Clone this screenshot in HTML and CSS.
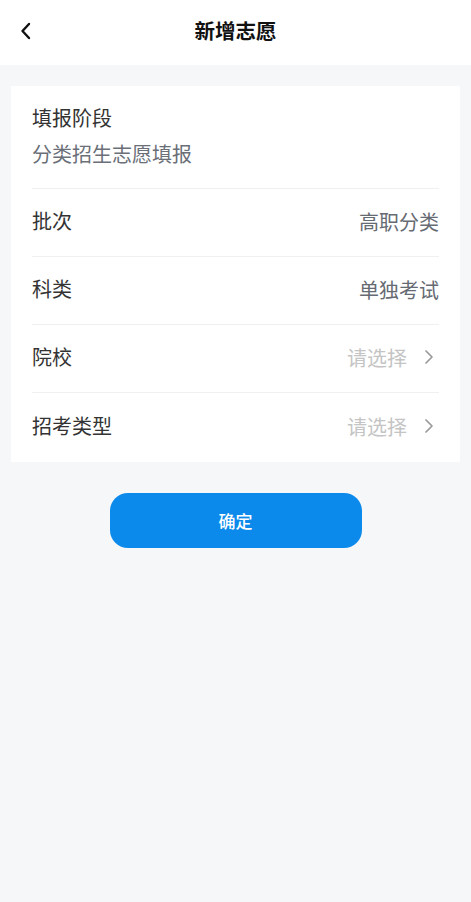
FILE: index.html
```html
<!DOCTYPE html>
<html lang="zh-CN">
<head>
<meta charset="utf-8">
<title>新增志愿</title>
<link rel="stylesheet" href="styles.css">
</head>
<body>
<div class="page">
  <header class="nav">
    <span class="back">
      <svg width="14" height="18" viewBox="0 0 14 18"><path d="M10 2 L3.5 9 L10 16" fill="none" stroke="#111" stroke-width="2.4" stroke-linecap="round" stroke-linejoin="round"/></svg>
    </span>
    <h1 class="title">新增志愿</h1>
  </header>
  <main class="content">
    <section class="card">
      <div class="stage">
        <div class="label">填报阶段</div>
        <div class="stage-value">分类招生志愿填报</div>
      </div>
      <div class="row">
        <span class="label">批次</span>
        <span class="value">高职分类</span>
      </div>
      <div class="row">
        <span class="label">科类</span>
        <span class="value">单独考试</span>
      </div>
      <div class="row">
        <span class="label">院校</span>
        <span class="picker"><span class="placeholder">请选择</span>
          <svg class="arrow" width="12" height="16" viewBox="0 0 12 16"><path d="M3 2 L9 8 L3 14" fill="none" stroke="#9a9a9a" stroke-width="1.7" stroke-linecap="round" stroke-linejoin="round"/></svg>
        </span>
      </div>
      <div class="row">
        <span class="label">招考类型</span>
        <span class="picker"><span class="placeholder">请选择</span>
          <svg class="arrow" width="12" height="16" viewBox="0 0 12 16"><path d="M3 2 L9 8 L3 14" fill="none" stroke="#9a9a9a" stroke-width="1.7" stroke-linecap="round" stroke-linejoin="round"/></svg>
        </span>
      </div>
    </section>
    <div class="actions">
      <button class="confirm">确定</button>
    </div>
  </main>
</div>
</body>
</html>
```
FILE: styles.css
```css
* { box-sizing: border-box; }
html, body { margin: 0; padding: 0; }
body {
  font-family: "Noto Sans CJK SC", "Noto Sans", sans-serif;
  background: #f5f7f9;
  color: #333;
}
.page { min-height: 902px; display: flex; flex-direction: column; }
.nav {
  height: 65px;
  padding-bottom: 4px;
  background: #fff;
  display: flex;
  align-items: center;
  justify-content: center;
  position: relative;
}
.back {
  position: absolute;
  left: 19px;
  top: 22px;
  display: flex;
}
.title {
  margin: 0;
  font-size: 20.5px;
  font-weight: 700;
  color: #111;
  line-height: 1;
}
.content { padding: 21px 11px 0; }
.card {
  background: #fff;
  padding: 0 21px;
}
.stage {
  height: 103px;
  padding-top: 18px;
  border-bottom: 1px solid #f0f0f0;
}
.label {
  font-size: 20px;
  color: #333;
  line-height: 28px;
}
.stage-value {
  margin-top: 8px;
  font-size: 20px;
  color: #6a6f78;
  line-height: 28px;
}
.row {
  height: 68px;
  padding-bottom: 3px;
  display: flex;
  align-items: center;
  justify-content: space-between;
  border-bottom: 1px solid #f0f0f0;
}
.row:last-child { border-bottom: none; height: 69px; }
.value { font-size: 20px; color: #666a72; }
.picker { display: flex; align-items: center; gap: 16px; }
.placeholder { font-size: 20px; color: #c4c4c4; }
.arrow { margin-right: 4px; }
.actions {
  display: flex;
  justify-content: center;
  padding-top: 31px;
}
.confirm {
  width: 252px;
  height: 55px;
  border: none;
  border-radius: 18px;
  background: #0b8aeb;
  color: #fff;
  font-family: inherit;
  font-size: 17px;
  font-weight: 500;
}
```
